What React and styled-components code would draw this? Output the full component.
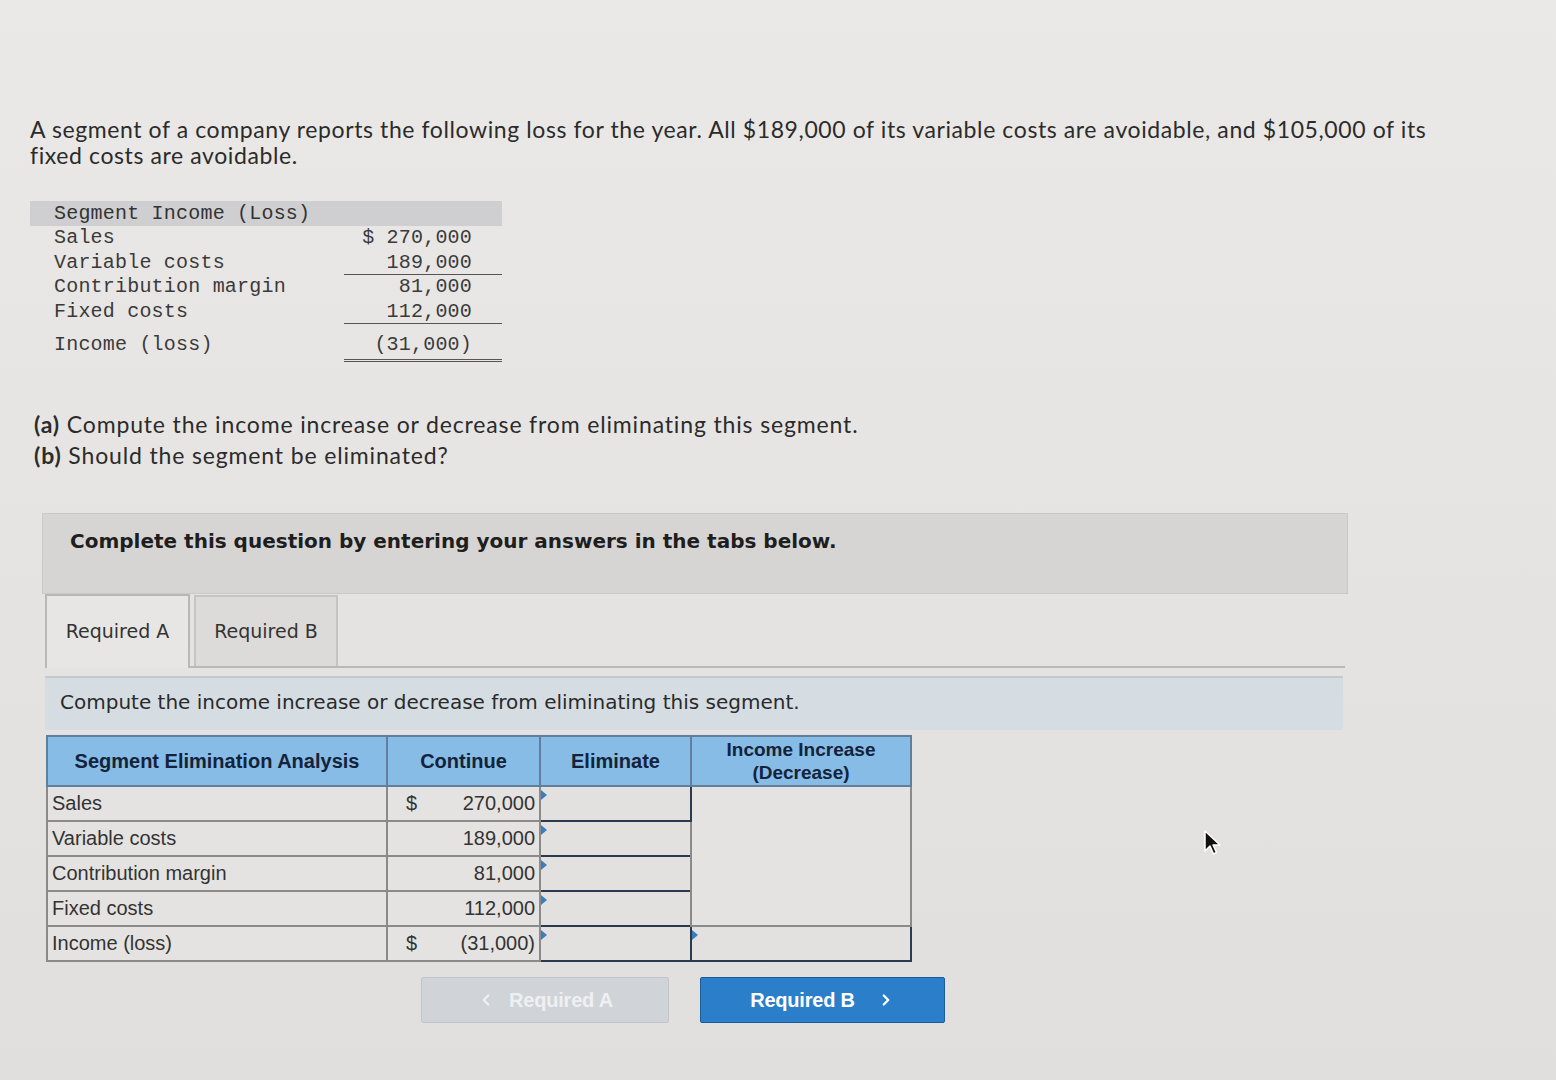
import React from 'react';
import styled, { createGlobalStyle } from 'styled-components';
import { ChevronLeft, ChevronRight } from 'lucide-react';

const GlobalStyle = createGlobalStyle`
  html, body {
    margin: 0;
    padding: 0;
    background: #e6e4e2;
  }
  body {
    font-family: 'Lato', 'Liberation Sans', sans-serif;
    color: #2a2a2a;
  }
`;

const Page = styled.div`
  position: relative;
  width: 1556px;
  height: 1080px;
  overflow: hidden;
  background: linear-gradient(180deg, #ebe9e7 0%, #e5e3e1 60%, #e1dfdd 100%);
  padding: 116px 0 0 30px;
  box-sizing: border-box;
`;

const Intro = styled.p`
  margin: 0;
  width: 1440px;
  font-size: 23px;
  letter-spacing: 0.6px;
  line-height: 26px;
  color: #2b2b2b;
`;

const SegTable = styled.div`
  display: grid;
  grid-template-columns: 314px 158px;
  margin-top: 33px;
  font-family: 'Liberation Mono', monospace;
  font-size: 20px;
  letter-spacing: 0.2px;
  color: #3a3a3a;
`;

const SegHead = styled.div`
  grid-column: 1 / 3;
  background: #cfcfd1;
  height: 25px;
  line-height: 25px;
  padding-left: 24px;
  color: #333;
`;

const SegLabel = styled.div`
  padding-left: 24px;
  height: 24.5px;
  line-height: 24.5px;
  ${p => p.$total && 'padding-top: 6px; height: 30px; line-height: 30px;'}
`;

const SegValue = styled.div`
  text-align: right;
  padding-right: 30px;
  height: 24.5px;
  line-height: 24.5px;
  border-bottom: ${p => (p.$rule ? '1.5px solid #555' : '0')};
  box-sizing: border-box;
  ${p => p.$total && 'padding-top: 6px; height: 38px; line-height: 30px; border-bottom: 3px double #555;'}
`;

const Questions = styled.div`
  margin-top: 47px;
  margin-left: 4px;
  font-size: 23px;
  letter-spacing: 0.85px;
  line-height: 31px;
  color: #2b2b2b;

  b {
    font-weight: 700;
  }
`;

const Notice = styled.div`
  margin-top: 42px;
  margin-left: 12px;
  width: 1306px;
  height: 81px;
  box-sizing: border-box;
  background: #d7d5d3;
  border: 1px solid #cbc9c7;
  padding: 16px 0 0 27px;
  line-height: 22px;
  font-family: 'DejaVu Sans', sans-serif;
  font-weight: 700;
  font-size: 20px;
  color: #1e1e1e;
`;

const Tabs = styled.div`
  display: flex;
  gap: 4px;
  margin-left: 15px;
  width: 1300px;
  border-bottom: 2px solid #b9b9b9;
  align-items: flex-end;
`;

const Tab = styled.div`
  width: ${p => p.$w}px;
  height: ${p => (p.$active ? 74 : 71)}px;
  box-sizing: border-box;
  display: flex;
  align-items: center;
  justify-content: center;
  font-family: 'DejaVu Sans', sans-serif;
  font-size: 19px;
  color: #333;
  background: ${p => (p.$active ? '#e8e6e4' : '#dddbd9')};
  border: 2px solid ${p => (p.$active ? '#b8b8b8' : '#c4c4c4')};
  border-bottom: 0;
  margin-bottom: ${p => (p.$active ? '-2px' : '0')};
  padding-bottom: 2px;
`;

const Instruction = styled.div`
  margin-top: 8px;
  margin-left: 15px;
  width: 1298px;
  height: 54px;
  box-sizing: border-box;
  background: #d5dde3;
  border-top: 2px solid #c3c9ce;
  display: flex;
  align-items: center;
  padding: 0 0 4px 15px;
  font-family: 'DejaVu Sans', sans-serif;
  font-size: 20px;
  color: #2a2a2a;
`;

const Analysis = styled.table`
  margin-top: 5px;
  margin-left: 16px;
  border-collapse: collapse;
  font-family: 'Liberation Sans', Arial, sans-serif;
  font-size: 20px;
  color: #333;
  table-layout: fixed;
`;

const Th = styled.th`
  width: ${p => p.$w}px;
  height: 48px;
  background: #86bce6;
  border: 2px solid #5f7f9c;
  color: #14233a;
  font-weight: 700;
  font-size: ${p => (p.$small ? 19 : 20)}px;
  line-height: 23px;
  padding: 0;
  text-align: center;
`;

const Td = styled.td`
  height: 33px;
  padding: 0 4px;
  border: 2px solid #8a8a8a;
  background: #e5e3e1;
  text-align: left;
  vertical-align: middle;
  white-space: nowrap;
`;

const MoneyCell = styled(Td)`
  padding: 0 4px 0 18px;
`;

const Money = styled.div`
  display: flex;
  justify-content: space-between;
`;

const InputCell = styled.td`
  position: relative;
  padding: 0;
  height: 33px;
  border: 2px solid #2b3a4c;
  background: #e3e1df;

  &::before {
    content: '';
    position: absolute;
    left: 0;
    top: 3px;
    border-top: 5px solid transparent;
    border-bottom: 5px solid transparent;
    border-left: 6px solid #3b7dbd;
  }
`;

const BlankCell = styled.td`
  border: 2px solid #8a8a8a;
  background: #e5e3e1;
`;

const Nav = styled.div`
  display: flex;
  gap: 31px;
  margin-top: 15px;
  margin-left: 391px;
`;

const NavButton = styled.button`
  width: ${p => p.$w}px;
  height: 46px;
  display: flex;
  align-items: center;
  justify-content: center;
  gap: ${p => (p.$primary ? 22 : 14)}px;
  font-family: 'Liberation Sans', Arial, sans-serif;
  font-weight: 700;
  font-size: 20px;
  letter-spacing: -0.2px;
  border-radius: 2px;
  cursor: ${p => (p.$primary ? 'pointer' : 'default')};
  color: ${p => (p.$primary ? '#ffffff' : '#eef0f2')};
  background: ${p => (p.$primary ? '#2b7fca' : '#d0d4d8')};
  border: 1px solid ${p => (p.$primary ? '#1b5d99' : '#c2c6ca')};
  padding: 0;
`;

const Cursor = styled.svg`
  position: absolute;
  left: 1203px;
  top: 829px;
`;

const segRows = [
  { label: 'Sales', value: '$ 270,000' },
  { label: 'Variable costs', value: '189,000', rule: true },
  { label: 'Contribution margin', value: '81,000' },
  { label: 'Fixed costs', value: '112,000', rule: true },
  { label: 'Income (loss)', value: '(31,000)', total: true },
];

const analysisRows = [
  { label: 'Sales', dollar: true, value: '270,000' },
  { label: 'Variable costs', value: '189,000' },
  { label: 'Contribution margin', value: '81,000' },
  { label: 'Fixed costs', value: '112,000' },
  { label: 'Income (loss)', dollar: true, value: '(31,000)' },
];

export default function App() {
  return (
    <Page>
      <GlobalStyle />
      <Intro>
        A segment of a company reports the following loss for the year. All $189,000 of its variable costs are avoidable, and $105,000 of its fixed costs are avoidable.
      </Intro>

      <SegTable>
        <SegHead>Segment Income (Loss)</SegHead>
        {segRows.map(r => (
          <React.Fragment key={r.label}>
            <SegLabel $total={r.total}>{r.label}</SegLabel>
            <SegValue $rule={r.rule} $total={r.total}>{r.value}</SegValue>
          </React.Fragment>
        ))}
      </SegTable>

      <Questions>
        <div><b>(a)</b> Compute the income increase or decrease from eliminating this segment.</div>
        <div><b>(b)</b> Should the segment be eliminated?</div>
      </Questions>

      <Notice>Complete this question by entering your answers in the tabs below.</Notice>

      <Tabs>
        <Tab $w={145} $active>Required A</Tab>
        <Tab $w={144}>Required B</Tab>
      </Tabs>

      <Instruction>Compute the income increase or decrease from eliminating this segment.</Instruction>

      <Analysis>
        <thead>
          <tr>
            <Th $w={338}>Segment Elimination Analysis</Th>
            <Th $w={151}>Continue</Th>
            <Th $w={149}>Eliminate</Th>
            <Th $w={218} $small>Income Increase<br />(Decrease)</Th>
          </tr>
        </thead>
        <tbody>
          {analysisRows.map((r, i) => (
            <tr key={r.label}>
              <Td>{r.label}</Td>
              <MoneyCell>
                <Money>
                  <span>{r.dollar ? '$' : ''}</span>
                  <span>{r.value}</span>
                </Money>
              </MoneyCell>
              <InputCell />
              {i === 0 && <BlankCell rowSpan={4} />}
              {i === 4 && <InputCell />}
            </tr>
          ))}
        </tbody>
      </Analysis>

      <Nav>
        <NavButton $w={248} disabled>
          <ChevronLeft size={18} strokeWidth={3} />
          Required A
        </NavButton>
        <NavButton $w={245} $primary>
          Required B
          <ChevronRight size={18} strokeWidth={3} />
        </NavButton>
      </Nav>

      <Cursor width="20" height="28" viewBox="0 0 20 28">
        <path d="M2 2 L2 22 L7 17 L10.5 25 L13.5 23.5 L10 16 L17 16 Z" fill="#111" stroke="#fff" strokeWidth="1.5" strokeLinejoin="round" />
      </Cursor>
    </Page>
  );
}
